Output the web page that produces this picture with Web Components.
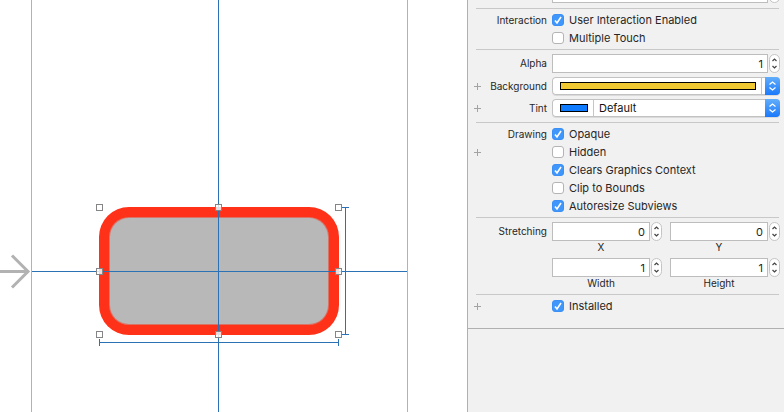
<!DOCTYPE html>
<html lang="en">
<head>
<meta charset="utf-8">
<title>View Attributes</title>
<style>
    html, body{
        height:100%;
        margin:0;
    }

    body{
        font-family: Inter, 'Liberation Sans', sans-serif;
        font-size: 11px;
        color: #262626;
        background: white;
    }
</style>
</head>
<body>

<template id="editor-window-template">
<style>
    :host{
        display:grid;
        grid-template-columns: minmax(0, 1fr) 317px;
        height:100%;
        overflow:hidden;
    }
</style>
<slot></slot>
</template>

<template id="design-canvas-template">
<style>
    :host{
        display:block;
        overflow:hidden;
        background:white;
    }

    svg{
        display:block;
        width:100%;
        height:100%;
    }

    .frame{ fill:#b2b2b2; }
    .entry{ fill:none; stroke:#b2b2b2; stroke-width:3; }
    .guide{ fill:#2b72b5; }
    .handle{ fill:white; stroke:#858585; }
    .over{ fill-opacity:.8; }
</style>
<svg viewBox="0 0 467 412" preserveAspectRatio="xMinYMin slice" role="img" aria-label="Canvas">
    <rect class="frame" x="31" y="0" width="1" height="412"/>
    <rect class="frame" x="407" y="0" width="1" height="412"/>
    <path class="entry" d="M0 271.5H28M12 255.5L28 271.5L12 287.5"/>

    <!-- selected view -->
    <rect x="99" y="207" width="240" height="128" rx="30" fill="#ff3118"/>
    <rect x="109" y="217" width="220" height="108" rx="20" fill="#da7466"/>
    <rect x="110" y="218" width="218" height="106" rx="19" fill="#b8b8b8"/>

    <!-- centre guides -->
    <g class="guide">
        <rect x="218" y="0" width="1" height="412"/>
        <rect x="32" y="271" width="375" height="1"/>
    </g>

    <!-- size guides -->
    <g class="guide">
        <rect x="345" y="207" width="1" height="128"/>
        <rect x="342" y="207" width="7" height="1"/>
        <rect x="342" y="334" width="7" height="1"/>
        <rect x="99" y="342" width="240" height="1"/>
        <rect x="99" y="339" width="1" height="7"/>
        <rect x="338" y="339" width="1" height="7"/>
    </g>

    <g class="handle">
        <rect x="96.5" y="204.5" width="6" height="6"/>
        <rect x="335.5" y="204.5" width="6" height="6"/>
        <rect x="96.5" y="331.5" width="6" height="6"/>
        <rect x="335.5" y="331.5" width="6" height="6"/>
        <rect class="over" x="215.5" y="204.5" width="6" height="6"/>
        <rect class="over" x="215.5" y="331.5" width="6" height="6"/>
        <rect class="over" x="96.5" y="268.5" width="6" height="6"/>
        <rect class="over" x="335.5" y="268.5" width="6" height="6"/>
    </g>
</svg>
</template>

<template id="inspector-panel-template">
<style>
    :host{
        display:block;
        box-sizing:border-box;
        border-left:1px solid #b0b0b0;
        background:#f1f1f1;
        overflow:hidden;
    }

    .content{
        padding:0 4px 11px 6px;
        border-bottom:1px solid #b0b0b0;
    }
</style>
<div class="content"><slot></slot></div>
</template>

<template id="inspector-group-template">
<style>
    :host{
        display:flex;
        flex-direction:column;
        gap:0;
        padding-bottom:2px;
    }

    :host::before{
        content:'';
        height:1px;
        margin:0 1px 2px 2px;
        background:#c8c8c8;
    }

    :host([fields]){
        gap:4px;
        padding-bottom:5px;
    }

    :host([fields])::before{
        margin-bottom:0;
    }

    /* continues a group that is scrolled out of view */
    :host([scrolled]){
        margin-top:-16px;
    }

    :host([scrolled])::before{
        display:none;
    }
</style>
<slot></slot>
</template>

<template id="inspector-row-template">
<style>
    :host{
        display:grid;
        grid-template-columns: 7px 61px minmax(0, 1fr);
        column-gap:5px;
        align-items:start;
    }

    button{
        display:flex;
        align-items:center;
        height:18px;
        margin:0;
        padding:0;
        border:none;
        background:none;
    }

    .label{
        grid-column:2;
        font-size:10px;
        line-height:18px;
        text-align:right;
        white-space:nowrap;
    }

    .control{
        grid-column:3;
    }

    :host(:not([addable])) button{
        display:none;
    }
</style>
<button type="button" aria-label="Add variation">
    <svg width="7" height="7" viewBox="0 0 7 7"><path d="M3.5 0V7M0 3.5H7" stroke="#a3a3a3"/></svg>
</button>
<div class="label"><slot name="label"></slot></div>
<div class="control"><slot></slot></div>
</template>

<template id="check-box-template">
<style>
    :host{
        display:block;
    }

    label{
        display:flex;
        align-items:center;
        gap:5px;
        height:18px;
        font-size:11px;
        white-space:nowrap;
    }

    .box{
        display:grid;
    }

    input, svg{
        grid-area:1 / 1;
        width:12px;
        height:12px;
    }

    input{
        appearance:none;
        box-sizing:border-box;
        margin:0;
        border:1px solid #b4b4b4;
        border-radius:3px;
        background:white;
    }

    input:checked{
        border-color:#3b8ff5;
        background:#3f97fb;
    }

    svg{
        pointer-events:none;
        visibility:hidden;
    }

    input:checked + svg{
        visibility:visible;
    }
</style>
<label>
    <span class="box">
        <input type="checkbox">
        <svg viewBox="0 0 12 12"><path d="M3 6.5L5 9L9 3" fill="none" stroke="white" stroke-width="1.6"/></svg>
    </span>
    <slot></slot>
</label>
</template>

<template id="number-field-template">
<style>
    :host{
        display:grid;
        grid-template-columns: minmax(0, 1fr) 11px;
        column-gap:1px;
    }

    ::slotted(input){
        box-sizing:border-box;
        width:100%;
        height:19px;
        margin:0;
        padding:0 4px;
        border:1px solid #bdbdbd;
        border-radius:0;
        outline:none;
        background:white;
        color:#1f1f1f;
        font:inherit;
        text-align:right;
    }

    ::slotted(label){
        grid-column:1;
        height:12px;
        font-size:10px;
        line-height:12px;
        text-align:center;
    }

    .stepper{
        display:flex;
        flex-direction:column;
        box-sizing:border-box;
        height:19px;
        padding:1px 0;
        border:1px solid #c4c4c4;
        border-radius:6px;
        background:white;
        overflow:hidden;
    }

    button{
        display:flex;
        flex:1;
        align-items:center;
        justify-content:center;
        min-height:0;
        margin:0;
        padding:0;
        border:none;
        background:none;
    }
</style>
<slot></slot>
<div class="stepper">
    <button type="button" aria-label="Increase"><svg width="5" height="4" viewBox="0 0 5 4"><path d="M.5 3L2.5 1L4.5 3" fill="none" stroke="#444" stroke-width="1.2"/></svg></button>
    <button type="button" aria-label="Decrease"><svg width="5" height="4" viewBox="0 0 5 4"><path d="M.5 1L2.5 3L4.5 1" fill="none" stroke="#444" stroke-width="1.2"/></svg></button>
</div>
<slot name="caption"></slot>
</template>

<template id="field-pair-template">
<style>
    :host{
        display:grid;
        grid-template-columns: 1fr 1fr;
        gap:5px 8px;
    }
</style>
<slot></slot>
</template>

<template id="color-popup-template">
<style>
    :host{
        display:grid;
        grid-template-columns: auto minmax(0, 1fr) 15px;
        box-sizing:border-box;
        height:18px;
        border-radius:4px;
        background:white;
        box-shadow: inset 0 0 0 1px #c2c2c2,
                    0 1px 0 0 #dadada;
        overflow:hidden;
    }

    /* the well takes all the room when there is no title */
    :host([wide]){
        grid-template-columns: minmax(0, 1fr) 3px 15px;
    }

    .well{
        display:flex;
        align-items:center;
        width:42px;
        margin:1px 0;
        padding:0 5px 0 8px;
        border:none;
        border-right:1px solid #c6c6c6;
        background:none;
        box-sizing:border-box;
    }

    :host([wide]) .well{
        width:auto;
    }

    .swatch{
        flex:1;
        box-sizing:border-box;
        height:8px;
        border:1px solid black;
        background:var(--well-color);
    }

    ::slotted(select){
        grid-row:1;
        grid-column:2 / 4;
        appearance:none;
        box-sizing:border-box;
        width:100%;
        height:18px;
        margin:0;
        padding:0 15px 0 5px;
        border:none;
        outline:none;
        background:none;
        color:#111;
        font:inherit;
    }

    .arrows{
        grid-row:1;
        grid-column:3;
        display:flex;
        align-items:center;
        justify-content:center;
        background:linear-gradient(#62aefb, #1b79fb);
        pointer-events:none;
    }
</style>
<button class="well" type="button" aria-label="Color"><span class="swatch"></span></button>
<slot></slot>
<span class="arrows">
    <svg width="7" height="10" viewBox="0 0 7 10"><path d="M.5 3.5L3.5 1L6.5 3.5M.5 6.5L3.5 9L6.5 6.5" fill="none" stroke="white" stroke-width="1.3"/></svg>
</span>
</template>

<editor-window>
    <design-canvas></design-canvas>
    <inspector-panel>
        <inspector-group fields scrolled>
            <inspector-row>
                <number-field><input type="text" inputmode="numeric" aria-label="Tag"></number-field>
            </inspector-row>
        </inspector-group>

        <inspector-group>
            <inspector-row>
                <span slot="label">Interaction</span>
                <check-box checked>User Interaction Enabled</check-box>
            </inspector-row>
            <inspector-row>
                <check-box>Multiple Touch</check-box>
            </inspector-row>
        </inspector-group>

        <inspector-group fields>
            <inspector-row>
                <label slot="label" for="alpha">Alpha</label>
                <number-field><input id="alpha" type="text" inputmode="decimal" value="1"></number-field>
            </inspector-row>
            <inspector-row addable>
                <label slot="label" for="background">Background</label>
                <color-popup wide color="#efc832">
                    <select id="background"><option label=" "></option></select>
                </color-popup>
            </inspector-row>
            <inspector-row addable>
                <label slot="label" for="tint">Tint</label>
                <color-popup color="#0f7bff">
                    <select id="tint"><option>Default</option></select>
                </color-popup>
            </inspector-row>
        </inspector-group>

        <inspector-group>
            <inspector-row>
                <span slot="label">Drawing</span>
                <check-box checked>Opaque</check-box>
            </inspector-row>
            <inspector-row addable>
                <check-box>Hidden</check-box>
            </inspector-row>
            <inspector-row>
                <check-box checked>Clears Graphics Context</check-box>
            </inspector-row>
            <inspector-row>
                <check-box>Clip to Bounds</check-box>
            </inspector-row>
            <inspector-row>
                <check-box checked>Autoresize Subviews</check-box>
            </inspector-row>
        </inspector-group>

        <inspector-group fields>
            <inspector-row>
                <span slot="label">Stretching</span>
                <field-pair>
                    <number-field>
                        <input id="stretch-x" type="text" inputmode="decimal" value="0">
                        <label slot="caption" for="stretch-x">X</label>
                    </number-field>
                    <number-field>
                        <input id="stretch-y" type="text" inputmode="decimal" value="0">
                        <label slot="caption" for="stretch-y">Y</label>
                    </number-field>
                    <number-field>
                        <input id="stretch-width" type="text" inputmode="decimal" value="1">
                        <label slot="caption" for="stretch-width">Width</label>
                    </number-field>
                    <number-field>
                        <input id="stretch-height" type="text" inputmode="decimal" value="1">
                        <label slot="caption" for="stretch-height">Height</label>
                    </number-field>
                </field-pair>
            </inspector-row>
        </inspector-group>

        <inspector-group>
            <inspector-row addable>
                <check-box checked>Installed</check-box>
            </inspector-row>
        </inspector-group>
    </inspector-panel>
</editor-window>

<script>
// BASE ELEMENT
class TemplateElement extends HTMLElement{

    constructor(){
        super();
        this.attachShadow({mode:'open'});
        const template = document.getElementById(`${this.localName}-template`);
        this.shadowRoot.appendChild(template.content.cloneNode(true));
    }
}

// LAYOUT
class EditorWindow extends TemplateElement{}
class DesignCanvas extends TemplateElement{}
class InspectorPanel extends TemplateElement{}
class InspectorGroup extends TemplateElement{}
class InspectorRow extends TemplateElement{}
class FieldPair extends TemplateElement{}

// CONTROLS
class CheckBox extends TemplateElement{

    connectedCallback(){
        this.shadowRoot.querySelector('input').checked = this.hasAttribute('checked');
    }
}

class NumberField extends TemplateElement{

    step(amount){
        const input = this.querySelector('input');
        input.value = Number(input.value) + amount;
    }

    connectedCallback(){
        const [up, down] = this.shadowRoot.querySelectorAll('button');
        up.onclick = () => this.step(1);
        down.onclick = () => this.step(-1);
    }
}

class ColorPopup extends TemplateElement{

    connectedCallback(){
        this.style.setProperty('--well-color', this.getAttribute('color'));
    }
}

window.customElements.define('editor-window', EditorWindow);
window.customElements.define('design-canvas', DesignCanvas);
window.customElements.define('inspector-panel', InspectorPanel);
window.customElements.define('inspector-group', InspectorGroup);
window.customElements.define('inspector-row', InspectorRow);
window.customElements.define('field-pair', FieldPair);
window.customElements.define('check-box', CheckBox);
window.customElements.define('number-field', NumberField);
window.customElements.define('color-popup', ColorPopup);
</script>
</body>
</html>
